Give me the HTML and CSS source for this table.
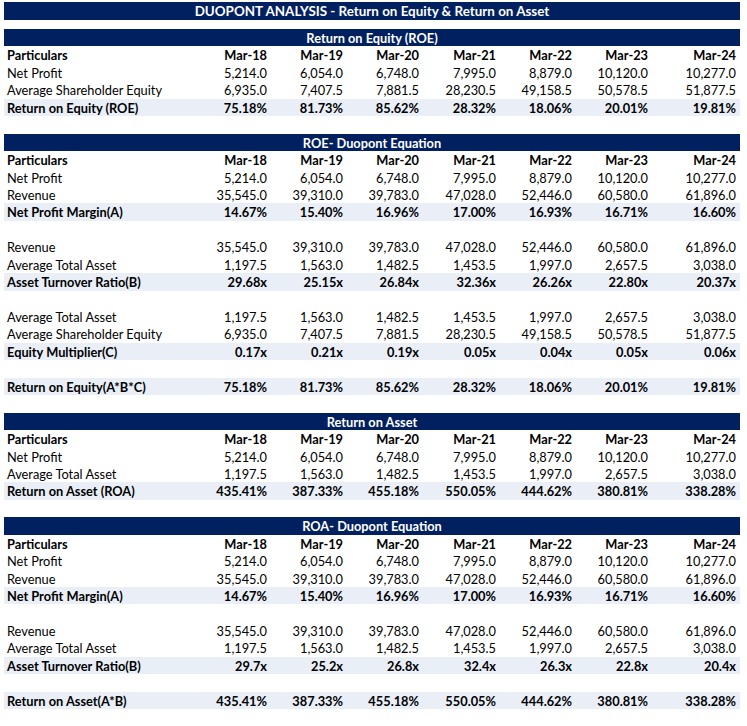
FILE: index.html
```html
<!DOCTYPE html>
<html>
<head>
<meta charset="utf-8">
<link rel="stylesheet" href="styles.css">
</head>
<body>
<div class="sheet">
  <div class="title">DUOPONT ANALYSIS - Return on Equity &amp; Return on Asset</div>
  <div class="rows">
    <div class="hdr">Return on Equity (ROE)</div>
    <div class="row bold"><span>Particulars</span><span>Mar-18</span><span>Mar-19</span><span>Mar-20</span><span>Mar-21</span><span>Mar-22</span><span>Mar-23</span><span>Mar-24</span></div>
    <div class="row"><span>Net Profit</span><span>5,214.0</span><span>6,054.0</span><span>6,748.0</span><span>7,995.0</span><span>8,879.0</span><span>10,120.0</span><span>10,277.0</span></div>
    <div class="row"><span>Average Shareholder Equity</span><span>6,935.0</span><span>7,407.5</span><span>7,881.5</span><span>28,230.5</span><span>49,158.5</span><span>50,578.5</span><span>51,877.5</span></div>
    <div class="row bold band"><span>Return on Equity (ROE)</span><span>75.18%</span><span>81.73%</span><span>85.62%</span><span>28.32%</span><span>18.06%</span><span>20.01%</span><span>19.81%</span></div>
    <div class="blank"></div>

    <div class="hdr">ROE- Duopont Equation</div>
    <div class="row bold"><span>Particulars</span><span>Mar-18</span><span>Mar-19</span><span>Mar-20</span><span>Mar-21</span><span>Mar-22</span><span>Mar-23</span><span>Mar-24</span></div>
    <div class="row"><span>Net Profit</span><span>5,214.0</span><span>6,054.0</span><span>6,748.0</span><span>7,995.0</span><span>8,879.0</span><span>10,120.0</span><span>10,277.0</span></div>
    <div class="row"><span>Revenue</span><span>35,545.0</span><span>39,310.0</span><span>39,783.0</span><span>47,028.0</span><span>52,446.0</span><span>60,580.0</span><span>61,896.0</span></div>
    <div class="row bold band"><span>Net Profit Margin(A)</span><span>14.67%</span><span>15.40%</span><span>16.96%</span><span>17.00%</span><span>16.93%</span><span>16.71%</span><span>16.60%</span></div>
    <div class="blank"></div>
    <div class="row"><span>Revenue</span><span>35,545.0</span><span>39,310.0</span><span>39,783.0</span><span>47,028.0</span><span>52,446.0</span><span>60,580.0</span><span>61,896.0</span></div>
    <div class="row"><span>Average Total Asset</span><span>1,197.5</span><span>1,563.0</span><span>1,482.5</span><span>1,453.5</span><span>1,997.0</span><span>2,657.5</span><span>3,038.0</span></div>
    <div class="row bold band"><span>Asset Turnover Ratio(B)</span><span>29.68x</span><span>25.15x</span><span>26.84x</span><span>32.36x</span><span>26.26x</span><span>22.80x</span><span>20.37x</span></div>
    <div class="blank"></div>
    <div class="row"><span>Average Total Asset</span><span>1,197.5</span><span>1,563.0</span><span>1,482.5</span><span>1,453.5</span><span>1,997.0</span><span>2,657.5</span><span>3,038.0</span></div>
    <div class="row"><span>Average Shareholder Equity</span><span>6,935.0</span><span>7,407.5</span><span>7,881.5</span><span>28,230.5</span><span>49,158.5</span><span>50,578.5</span><span>51,877.5</span></div>
    <div class="row bold band"><span>Equity Multiplier(C)</span><span>0.17x</span><span>0.21x</span><span>0.19x</span><span>0.05x</span><span>0.04x</span><span>0.05x</span><span>0.06x</span></div>
    <div class="blank"></div>
    <div class="row bold band"><span>Return on Equity(A*B*C)</span><span>75.18%</span><span>81.73%</span><span>85.62%</span><span>28.32%</span><span>18.06%</span><span>20.01%</span><span>19.81%</span></div>
    <div class="blank"></div>

    <div class="hdr">Return on Asset</div>
    <div class="row bold"><span>Particulars</span><span>Mar-18</span><span>Mar-19</span><span>Mar-20</span><span>Mar-21</span><span>Mar-22</span><span>Mar-23</span><span>Mar-24</span></div>
    <div class="row"><span>Net Profit</span><span>5,214.0</span><span>6,054.0</span><span>6,748.0</span><span>7,995.0</span><span>8,879.0</span><span>10,120.0</span><span>10,277.0</span></div>
    <div class="row"><span>Average Total Asset</span><span>1,197.5</span><span>1,563.0</span><span>1,482.5</span><span>1,453.5</span><span>1,997.0</span><span>2,657.5</span><span>3,038.0</span></div>
    <div class="row bold band"><span>Return on Asset (ROA)</span><span>435.41%</span><span>387.33%</span><span>455.18%</span><span>550.05%</span><span>444.62%</span><span>380.81%</span><span>338.28%</span></div>
    <div class="blank"></div>

    <div class="hdr">ROA- Duopont Equation</div>
    <div class="row bold"><span>Particulars</span><span>Mar-18</span><span>Mar-19</span><span>Mar-20</span><span>Mar-21</span><span>Mar-22</span><span>Mar-23</span><span>Mar-24</span></div>
    <div class="row"><span>Net Profit</span><span>5,214.0</span><span>6,054.0</span><span>6,748.0</span><span>7,995.0</span><span>8,879.0</span><span>10,120.0</span><span>10,277.0</span></div>
    <div class="row"><span>Revenue</span><span>35,545.0</span><span>39,310.0</span><span>39,783.0</span><span>47,028.0</span><span>52,446.0</span><span>60,580.0</span><span>61,896.0</span></div>
    <div class="row bold band"><span>Net Profit Margin(A)</span><span>14.67%</span><span>15.40%</span><span>16.96%</span><span>17.00%</span><span>16.93%</span><span>16.71%</span><span>16.60%</span></div>
    <div class="blank"></div>
    <div class="row"><span>Revenue</span><span>35,545.0</span><span>39,310.0</span><span>39,783.0</span><span>47,028.0</span><span>52,446.0</span><span>60,580.0</span><span>61,896.0</span></div>
    <div class="row"><span>Average Total Asset</span><span>1,197.5</span><span>1,563.0</span><span>1,482.5</span><span>1,453.5</span><span>1,997.0</span><span>2,657.5</span><span>3,038.0</span></div>
    <div class="row bold band"><span>Asset Turnover Ratio(B)</span><span>29.7x</span><span>25.2x</span><span>26.8x</span><span>32.4x</span><span>26.3x</span><span>22.8x</span><span>20.4x</span></div>
    <div class="blank"></div>
    <div class="row bold band"><span>Return on Asset(A*B)</span><span>435.41%</span><span>387.33%</span><span>455.18%</span><span>550.05%</span><span>444.62%</span><span>380.81%</span><span>338.28%</span></div>
  </div>
</div>
</body>
</html>
```
FILE: styles.css
```css
html, body {
  margin: 0;
  padding: 0;
  background: #ffffff;
}
body {
  font-family: "Lato", "Liberation Sans", sans-serif;
  font-size: 12.8px;
  color: #000000;
}
.sheet {
  width: 736px;
  margin-left: 4px;
  padding-top: 2px;
}
.title {
  height: 18px;
  line-height: 19px;
  background: #002060;
  color: #ffffff;
  font-weight: bold;
  font-size: 13.4px;
  text-align: center;
  margin-bottom: 9px;
}
.rows {
  display: flex;
  flex-direction: column;
}
.hdr {
  height: 17.45px;
  line-height: 19px;
  background: #002060;
  color: #ffffff;
  font-weight: bold;
  text-align: center;
}
.blank {
  height: 17.45px;
}
.row {
  display: grid;
  grid-template-columns: 190px 76px 76px 76px 77px 76px 76px 89px;
  height: 17.45px;
  line-height: 19.4px;
  white-space: nowrap;
}
.row span {
  text-align: right;
  padding-right: 3px;
  height: 17.45px;
}
.row span:first-child {
  text-align: left;
  padding-left: 3px;
  padding-right: 0;
}
.row span:last-child {
  padding-right: 4px;
}
.bold {
  font-weight: bold;
}
.band {
  background: #e9eef7;
}
```
